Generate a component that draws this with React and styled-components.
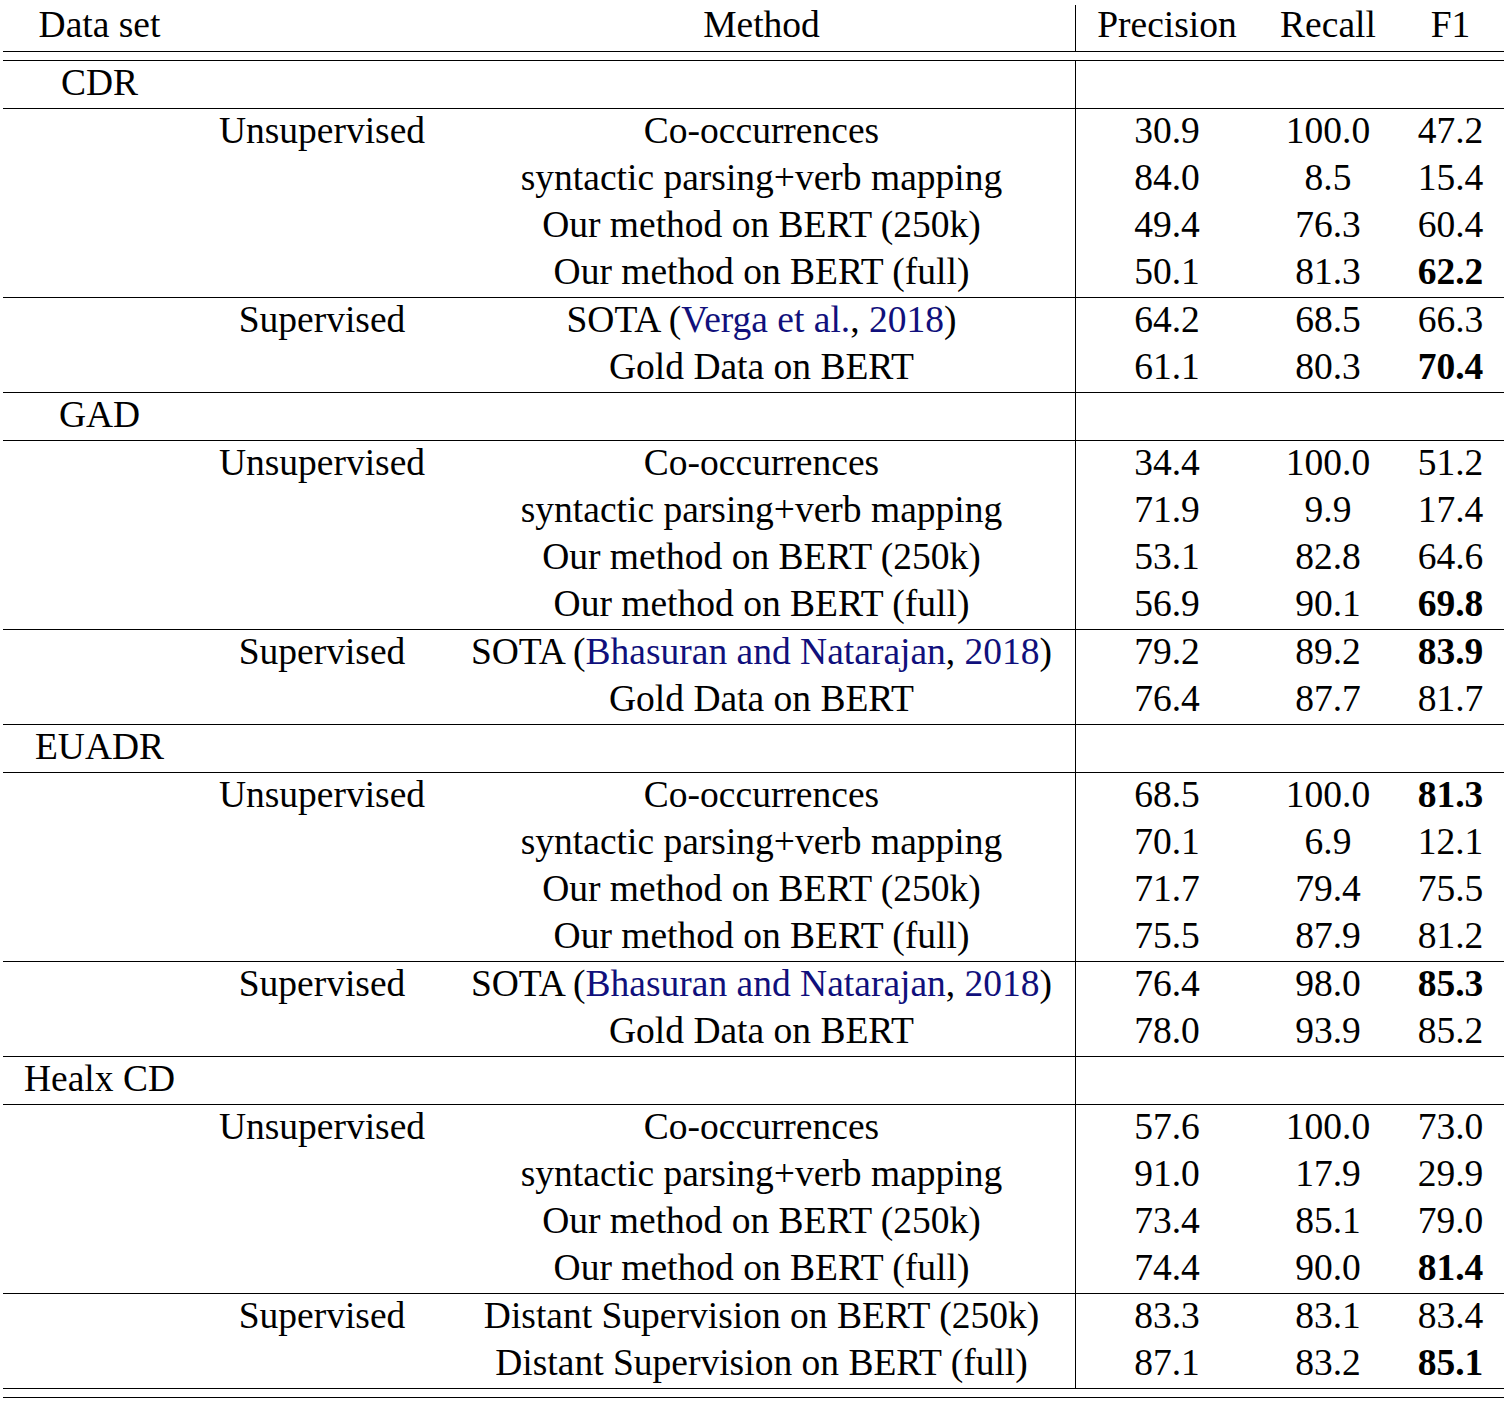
import React from "react";
import styled, { createGlobalStyle } from "styled-components";

const Global = createGlobalStyle`
  html, body { margin: 0; padding: 0; background: #fff; }
  body { font-family: "Liberation Serif", "Times New Roman", serif; color: #000; }
`;

const Page = styled.div`
  padding: 5px 0 0 3px;
`;

const Table = styled.table`
  border-collapse: separate;
  border-spacing: 0;
  table-layout: fixed;
  width: 1501px;
  font-family: "Liberation Serif", "Times New Roman", serif;
  font-size: 37.5px;
`;

const Col = styled.col`
  width: ${(p) => p.$w}px;
`;

const Row = styled.tr`
  height: ${(p) => (p.$head ? 46 : 47)}px;
`;

const Cell = styled.td`
  padding: 0 0 ${(p) => (p.$head ? 7 : 4)}px 0;
  line-height: ${(p) => (p.$head ? 39 : 43)}px;
  text-align: center;
  white-space: nowrap;
  vertical-align: top;
  font-weight: ${(p) => (p.$bold ? 700 : 400)};
  box-shadow: ${(p) => (p.$divider ? "inset 1px 0 0 #000" : "none")};
`;

const RuleRow = styled.tr`
  height: ${(p) => p.$h || 1}px;
`;

const RuleCell = styled.td`
  padding: 0;
  background: ${(p) => (p.$blank ? "transparent" : "#000")};
  line-height: 0;
  font-size: 0;
`;

const Cite = styled.span`
  color: #10107c;
`;

const cols = [193, 252, 627, 184, 138, 107];

const SOTA = ({ cite }) => (
  <>
    SOTA (<Cite>{cite}</Cite>, <Cite>2018</Cite>)
  </>
);

const data = [
  {
    name: "CDR",
    groups: [
      {
        label: "Unsupervised",
        rows: [
          ["Co-occurrences", "30.9", "100.0", "47.2"],
          ["syntactic parsing+verb mapping", "84.0", "8.5", "15.4"],
          ["Our method on BERT (250k)", "49.4", "76.3", "60.4"],
          ["Our method on BERT (full)", "50.1", "81.3", "62.2", true],
        ],
      },
      {
        label: "Supervised",
        rows: [
          [<SOTA cite="Verga et al." />, "64.2", "68.5", "66.3"],
          ["Gold Data on BERT", "61.1", "80.3", "70.4", true],
        ],
      },
    ],
  },
  {
    name: "GAD",
    groups: [
      {
        label: "Unsupervised",
        rows: [
          ["Co-occurrences", "34.4", "100.0", "51.2"],
          ["syntactic parsing+verb mapping", "71.9", "9.9", "17.4"],
          ["Our method on BERT (250k)", "53.1", "82.8", "64.6"],
          ["Our method on BERT (full)", "56.9", "90.1", "69.8", true],
        ],
      },
      {
        label: "Supervised",
        rows: [
          [<SOTA cite="Bhasuran and Natarajan" />, "79.2", "89.2", "83.9", true],
          ["Gold Data on BERT", "76.4", "87.7", "81.7"],
        ],
      },
    ],
  },
  {
    name: "EUADR",
    groups: [
      {
        label: "Unsupervised",
        rows: [
          ["Co-occurrences", "68.5", "100.0", "81.3", true],
          ["syntactic parsing+verb mapping", "70.1", "6.9", "12.1"],
          ["Our method on BERT (250k)", "71.7", "79.4", "75.5"],
          ["Our method on BERT (full)", "75.5", "87.9", "81.2"],
        ],
      },
      {
        label: "Supervised",
        rows: [
          [<SOTA cite="Bhasuran and Natarajan" />, "76.4", "98.0", "85.3", true],
          ["Gold Data on BERT", "78.0", "93.9", "85.2"],
        ],
      },
    ],
  },
  {
    name: "Healx CD",
    groups: [
      {
        label: "Unsupervised",
        rows: [
          ["Co-occurrences", "57.6", "100.0", "73.0"],
          ["syntactic parsing+verb mapping", "91.0", "17.9", "29.9"],
          ["Our method on BERT (250k)", "73.4", "85.1", "79.0"],
          ["Our method on BERT (full)", "74.4", "90.0", "81.4", true],
        ],
      },
      {
        label: "Supervised",
        rows: [
          ["Distant Supervision on BERT (250k)", "83.3", "83.1", "83.4"],
          ["Distant Supervision on BERT (full)", "87.1", "83.2", "85.1", true],
        ],
      },
    ],
  },
];

const Rule = () => (
  <RuleRow>
    <RuleCell colSpan={6} />
  </RuleRow>
);

const DoubleRule = ({ id }) => (
  <>
    <Rule key={`${id}-a`} />
    <RuleRow $h={8}>
      <RuleCell colSpan={6} $blank />
    </RuleRow>
    <Rule key={`${id}-b`} />
  </>
);

export default function App() {
  const body = [];
  data.forEach((set, si) => {
    if (si > 0) body.push(<Rule key={`r-${si}`} />);
    body.push(
      <Row key={`n-${si}`}>
        <Cell>{set.name}</Cell>
        <Cell />
        <Cell />
        <Cell $divider />
        <Cell />
        <Cell />
      </Row>
    );
    set.groups.forEach((g, gi) => {
      body.push(<Rule key={`g-${si}-${gi}`} />);
      g.rows.forEach((r, ri) => {
        body.push(
          <Row key={`d-${si}-${gi}-${ri}`}>
            <Cell />
            <Cell>{ri === 0 ? g.label : ""}</Cell>
            <Cell>{r[0]}</Cell>
            <Cell $divider>{r[1]}</Cell>
            <Cell>{r[2]}</Cell>
            <Cell $bold={!!r[4]}>{r[3]}</Cell>
          </Row>
        );
      });
    });
  });

  return (
    <Page>
      <Global />
      <Table>
        <colgroup>
          {cols.map((w, i) => (
            <Col key={i} $w={w} />
          ))}
        </colgroup>
        <thead>
          <Row $head>
            <Cell $head>Data set</Cell>
            <Cell $head />
            <Cell $head>Method</Cell>
            <Cell $head $divider>Precision</Cell>
            <Cell $head>Recall</Cell>
            <Cell $head>F1</Cell>
          </Row>
        </thead>
        <tbody>
          <DoubleRule id="top" />
          {body}
          <DoubleRule id="bottom" />
        </tbody>
      </Table>
    </Page>
  );
}
